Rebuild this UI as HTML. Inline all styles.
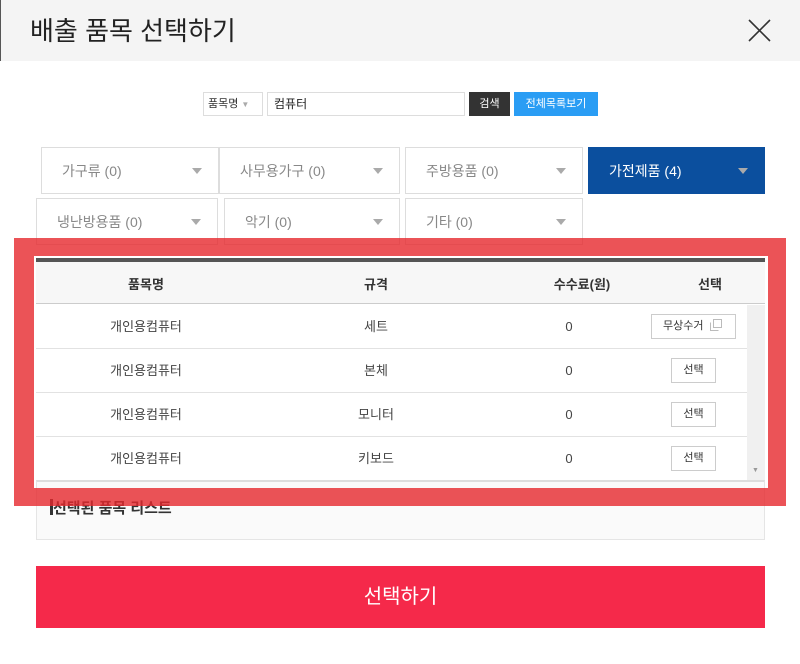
<!DOCTYPE html>
<html><head><meta charset="utf-8"><style>
*{box-sizing:border-box;margin:0;padding:0}
body{width:800px;height:664px;background:#fff;font-family:"Liberation Sans","Noto Sans CJK KR",sans-serif;position:relative;overflow:hidden;color:#333}
.a{position:absolute}
.hdr{left:0;top:0;width:800px;height:61px;background:#f4f4f4;border-left:1px solid #555}
.title{left:30px;top:11px;font-size:26px;color:#222}
.tab{position:absolute;border:1px solid #ddd;background:#fff;font-size:14px;color:#888;padding-left:20px;display:flex;align-items:center}
.tab:after{content:"";position:absolute;right:16px;top:50%;margin-top:-3px;border:5px solid transparent;border-top:6px solid #aaa;border-bottom:0}
.row{position:absolute;left:36px;width:711px;height:44px;border-bottom:1px solid #e2e2e2;font-size:13px;color:#444}
.row span{position:absolute;top:0;line-height:44px;transform:translateX(-50%)}
.btn{position:absolute;top:9px;height:25px;border:1px solid #ccc;font-size:11px;line-height:23px;text-align:center;background:#fff;color:#333;white-space:nowrap}
</style></head><body>
<div class="a hdr"></div>
<div class="a title">배출 품목 선택하기</div>
<svg class="a" style="left:748px;top:19px" width="23" height="23"><path d="M1 1L22 22M22 1L1 22" stroke="#333" stroke-width="1.6"/></svg>

<div class="a" style="left:203px;top:92px;width:60px;height:24px;border:1px solid #ddd;font-size:11px;line-height:22px;padding-left:4px">품목명 <span style="color:#aaa;font-size:8px">▼</span></div>
<div class="a" style="left:267px;top:92px;width:198px;height:24px;border:1px solid #ddd;font-size:12px;line-height:22px;padding-left:6px;color:#222">컴퓨터</div>
<div class="a" style="left:469px;top:92px;width:41px;height:24px;background:#333;color:#fff;font-size:11px;line-height:24px;text-align:center">검색</div>
<div class="a" style="left:514px;top:92px;width:84px;height:24px;background:#2a9df4;color:#fff;font-size:11px;line-height:24px;text-align:center">전체목록보기</div>

<div class="tab" style="left:41px;top:147px;width:178px;height:47px">가구류 (0)</div>
<div class="tab" style="left:219px;top:147px;width:181px;height:47px">사무용가구 (0)</div>
<div class="tab" style="left:405px;top:147px;width:178px;height:47px">주방용품 (0)</div>
<div class="tab" style="left:588px;top:147px;width:177px;height:47px;background:#0b4f9e;border-color:#0b4f9e;color:#fff">가전제품 (4)</div>
<div class="tab" style="left:36px;top:198px;width:182px;height:47px">냉난방용품 (0)</div>
<div class="tab" style="left:224px;top:198px;width:176px;height:47px">악기 (0)</div>
<div class="tab" style="left:405px;top:198px;width:178px;height:47px">기타 (0)</div>

<div class="a" style="left:34px;top:256px;width:734px;height:232px;background:#fff"></div>
<div class="a" style="left:36px;top:258px;width:729px;height:4px;background:#555"></div>
<div class="a" style="left:36px;top:262px;width:729px;height:42px;background:#f7f7f7;border-bottom:1px solid #ccc;font-size:13px;font-weight:bold;color:#333">
<span class="a" style="left:110px;top:12px;transform:translateX(-50%)">품목명</span>
<span class="a" style="left:340px;top:12px;transform:translateX(-50%)">규격</span>
<span class="a" style="left:546px;top:12px;transform:translateX(-50%)">수수료(원)</span>
<span class="a" style="left:674px;top:12px;transform:translateX(-50%)">선택</span></div>
<div class="a" style="left:747px;top:305px;width:18px;height:175px;background:#f0f0f0"></div>
<div class="a" style="left:752px;top:467px;font-size:7px;color:#999">▼</div>

<div class="row" style="top:305px"><span style="left:110px">개인용컴퓨터</span><span style="left:340px">세트</span><span style="left:533px">0</span><div class="btn" style="left:615px;width:85px;text-align:left;padding-left:11px">무상수거 <svg width="12" height="12" style="vertical-align:-2px;margin-left:3px"><rect x="3.5" y="0.5" width="8" height="8" fill="none" stroke="#bbb"/><path d="M0.5 3.5V11.5H8.5" fill="none" stroke="#bbb"/></svg></div></div>
<div class="row" style="top:349px"><span style="left:110px">개인용컴퓨터</span><span style="left:340px">본체</span><span style="left:533px">0</span><div class="btn" style="left:635px;width:45px">선택</div></div>
<div class="row" style="top:393px"><span style="left:110px">개인용컴퓨터</span><span style="left:340px">모니터</span><span style="left:533px">0</span><div class="btn" style="left:635px;width:45px">선택</div></div>
<div class="row" style="top:437px"><span style="left:110px">개인용컴퓨터</span><span style="left:340px">키보드</span><span style="left:533px">0</span><div class="btn" style="left:635px;width:45px">선택</div></div>

<div class="a" style="left:36px;top:480px;width:729px;height:60px;background:#fafafa;border:1px solid #e5e5e5;border-top:2px solid #ddd"></div>
<div class="a" style="left:50px;top:497px;font-size:15px;font-weight:bold;color:#333"><span style="display:inline-block;width:3px;height:16px;background:#333;vertical-align:-2px"></span>선택된 품목 리스트</div>

<div class="a" style="left:14px;top:238px;width:772px;height:268px;border:20px solid rgba(230,40,45,0.8);border-top-width:18px;border-right-width:18px;border-bottom-width:18px"></div>

<div class="a" style="left:36px;top:566px;width:729px;height:62px;background:#f5294a;color:#fff;font-size:20px;line-height:62px;text-align:center">선택하기</div>
</body></html>
